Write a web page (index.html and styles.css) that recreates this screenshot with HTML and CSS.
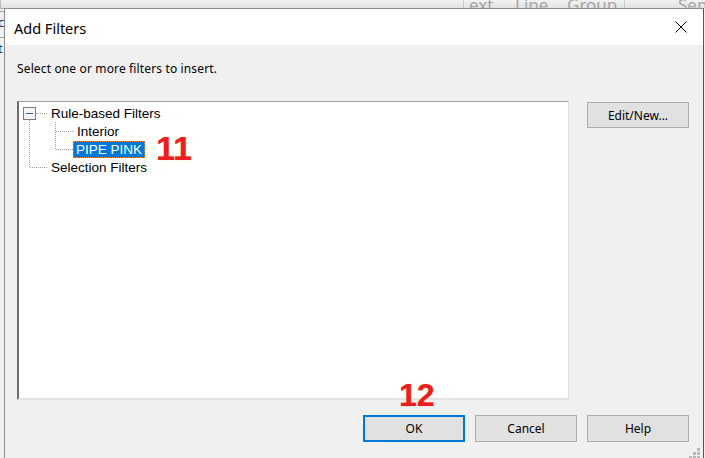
FILE: index.html
```html
<!DOCTYPE html>
<html>
<head>
<meta charset="utf-8">
<link rel="stylesheet" href="styles.css">
</head>
<body>
<div class="backdrop-top">
  <span class="bt bt-ext">ext</span>
  <span class="bt bt-line">Line</span>
  <span class="bt bt-group">Group</span>
  <span class="bt bt-sen">Sen</span>
</div>
<div class="stage">
  <div class="backdrop-left">
    <span class="bl bl-c">c</span>
    <span class="bl bl-t">t</span>
  </div>
  <div class="dialog">
    <div class="titlebar">
      <span class="title">Add Filters</span>
      <div class="close">
        <svg width="12" height="12" viewBox="0 0 12 12"><path d="M0.5 0.5 L11.5 11.5 M11.5 0.5 L0.5 11.5" stroke="#000" stroke-width="1" fill="none"/></svg>
      </div>
    </div>
    <div class="body">
      <p class="prompt">Select one or more filters to insert.</p>
      <div class="main">
        <div class="tree">
          <div class="row">
            <svg class="gutter" width="32" height="18" viewBox="0 0 32 18">
              <rect x="4.5" y="3.5" width="12" height="12" fill="#f4f4f4" stroke="#7b7b7b"/>
              <path d="M7 9.5 H14" stroke="#3a5ea8" stroke-width="1"/>
              <path d="M17 9.5 H29" stroke="#a0a0a0" stroke-dasharray="1 1"/>
              <path d="M10.5 16 V18" stroke="#a0a0a0" stroke-dasharray="1 1"/>
            </svg>
            <span class="label">Rule-based Filters</span>
          </div>
          <div class="row">
            <svg class="gutter" width="58" height="18" viewBox="0 0 58 18">
              <path d="M10.5 0 V18" stroke="#a0a0a0" stroke-dasharray="1 1"/>
              <path d="M36.5 0 V18" stroke="#a0a0a0" stroke-dasharray="1 1"/>
              <path d="M37 9.5 H54" stroke="#a0a0a0" stroke-dasharray="1 1"/>
            </svg>
            <span class="label">Interior</span>
          </div>
          <div class="row">
            <svg class="gutter" width="54" height="18" viewBox="0 0 54 18">
              <path d="M10.5 0 V18" stroke="#a0a0a0" stroke-dasharray="1 1"/>
              <path d="M36.5 0 V9" stroke="#a0a0a0" stroke-dasharray="1 1"/>
              <path d="M37 9.5 H54" stroke="#a0a0a0" stroke-dasharray="1 1"/>
            </svg>
            <span class="label selected">PIPE PINK</span>
            <span class="badge badge-11">11</span>
          </div>
          <div class="row">
            <svg class="gutter" width="32" height="18" viewBox="0 0 32 18">
              <path d="M10.5 0 V9" stroke="#a0a0a0" stroke-dasharray="1 1"/>
              <path d="M11 9.5 H29" stroke="#a0a0a0" stroke-dasharray="1 1"/>
            </svg>
            <span class="label">Selection Filters</span>
          </div>
        </div>
        <div class="side">
          <button class="btn">Edit/New...</button>
        </div>
      </div>
      <div class="footer">
        <div class="ok-wrap">
          <span class="badge badge-12">12</span>
          <button class="btn btn-default">OK</button>
        </div>
        <button class="btn">Cancel</button>
        <button class="btn">Help</button>
      </div>
      <div class="grip">
        <svg width="11" height="11" viewBox="0 0 11 11" fill="#b8b8b8">
          <rect x="8" y="0" width="3" height="3"/>
          <rect x="4" y="4" width="3" height="3"/><rect x="8" y="4" width="3" height="3"/>
          <rect x="0" y="8" width="3" height="3"/><rect x="4" y="8" width="3" height="3"/><rect x="8" y="8" width="3" height="3"/>
        </svg>
      </div>
    </div>
  </div>
</div>
</body>
</html>
```

FILE: styles.css
```css
* { box-sizing: border-box; }
html, body { margin: 0; padding: 0; }
body {
  width: 705px;
  height: 458px;
  overflow: hidden;
  background: #f0f0f0;
  font-family: "Noto Sans", "Open Sans", sans-serif;
  font-size: 12px;
  color: #000;
}
.backdrop-top {
  height: 8px;
  overflow: hidden;
  position: relative;
  background: linear-gradient(#f2f2f2, #e2e2e2);
  border-left: 1px solid #bdbdbd;
}
.bt {
  position: absolute;
  top: -4px;
  font-size: 17px;
  line-height: 17px;
  color: #a6a6a6;
}
.bt-ext { left: 468px; }
.bt-line { left: 514px; }
.bt-group { left: 566px; }
.bt-sen { left: 677px; }
.backdrop-top::before {
  content: "";
  position: absolute;
  left: 462px; top: 0;
  width: 1px; height: 8px;
  background: #c8c8c8;
}
.backdrop-top::after {
  content: "";
  position: absolute;
  left: 623px; top: 0;
  width: 1px; height: 8px;
  background: #c8c8c8;
}
.stage {
  display: flex;
  align-items: flex-start;
}
.backdrop-left {
  width: 4px;
  height: 460px;
  overflow: hidden;
  position: relative;
  background: #f0f0f0;
  border-top: 1px solid #b0b0b0;
}
.backdrop-left::before {
  content: "";
  position: absolute;
  left: 0; top: 2px; width: 4px; height: 1px; background: #a8a8a8;
}
.backdrop-left::after {
  content: "";
  position: absolute;
  left: 0; top: 28px; width: 4px; height: 1px; background: #a8a8a8;
}
.bl {
  position: absolute;
  left: -2px;
  font-size: 13px;
  line-height: 13px;
  color: #333;
}
.bl-c { top: 7px; }
.bl-t { top: 33px; }

.dialog {
  width: 700px;
  height: 460px;
  border: 1px solid #8a8a8a;
  border-right-color: #555;
  background: #f0f0f0;
  display: flex;
  flex-direction: column;
}
.titlebar {
  height: 36px;
  background: #fff;
  display: flex;
  align-items: center;
  justify-content: space-between;
  padding-left: 9px;
}
.title {
  font-size: 14.5px;
  color: #000;
  position: relative;
  top: 1px;
}
.close {
  width: 46px;
  height: 36px;
  display: flex;
  align-items: center;
  justify-content: center;
  padding-left: 2px;
}
.body {
  flex: 1;
  padding: 0 14px 0 12px;
  display: flex;
  flex-direction: column;
  position: relative;
}
.prompt {
  margin: 16px 0 0 0;
  line-height: 16px;
  height: 16px;
  letter-spacing: 0.14px;
}
.main {
  display: flex;
  margin-top: 24px;
  gap: 18px;
}
.tree {
  width: 552px;
  height: 299px;
  background: #fff;
  border-top: 1px solid #a0a0a0;
  border-left: 2px solid #6d6d6d;
  border-right: 1px solid #e3e3e3;
  border-bottom: 2px solid #e3e3e3;
  padding-top: 2px;
  padding-left: 0;
  display: flex;
  flex-direction: column;
  font-family: "Liberation Sans", Arial, sans-serif;
  font-size: 13.5px;
}
.row {
  height: 18px;
  display: flex;
  align-items: center;
  position: relative;
}
.gutter { display: block; flex: none; }
.label {
  line-height: 17px;
  white-space: nowrap;
}
.selected {
  background: #0078d7;
  color: #fff;
  padding: 0 3px;
  outline: 1px dotted #f08a2c;
  outline-offset: -1px;
}
.badge {
  position: absolute;
  color: #ec1c24;
  font-family: "Liberation Sans", Arial, sans-serif;
  font-weight: bold;
  text-shadow: 0 0 1px #f7931e;
}
.badge-11 {
  left: 137px;
  top: -9px;
  font-size: 34px;
  line-height: 35px;
}
.side {
  width: 102px;
  padding-top: 1px;
}
.btn {
  width: 102px;
  height: 26px;
  background: #e1e1e1;
  border: 1px solid #adadad;
  font-family: "Noto Sans", "Open Sans", sans-serif;
  font-size: 12px;
  color: #000;
  padding: 0;
  margin: 0;
}
.footer {
  display: flex;
  justify-content: flex-end;
  gap: 10px;
  margin-top: 15px;
}
.footer .btn { height: 27px; }
.ok-wrap { position: relative; }
.btn-default {
  border: 2px solid #0078d7;
  display: block;
}
.badge-12 {
  left: 36px;
  top: -36px;
  font-size: 32px;
  line-height: 32px;
}
.grip {
  position: absolute;
  right: 3px;
  top: 401px;
}
```
